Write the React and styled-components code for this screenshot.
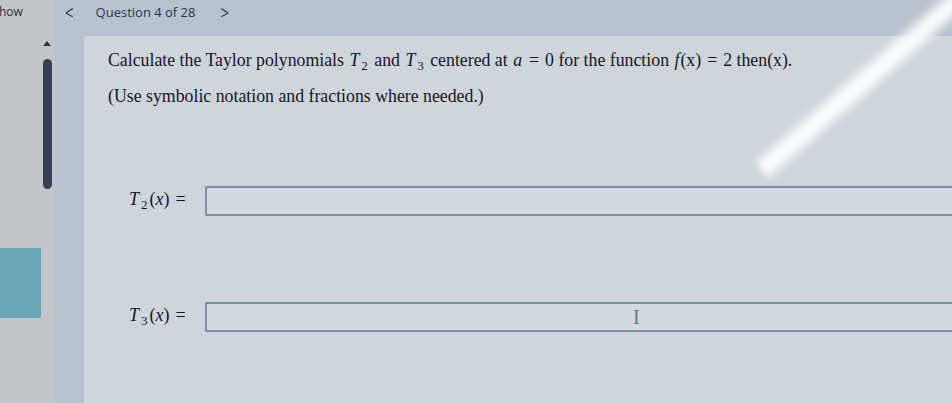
import React from "react";
import styled, { createGlobalStyle } from "styled-components";

const GlobalStyle = createGlobalStyle`
  html, body { margin: 0; padding: 0; }
  body {
    width: 952px;
    height: 403px;
    overflow: hidden;
    background: #c3c7ca;
  }
`;

const Page = styled.div`
  position: relative;
  display: flex;
  width: 952px;
  height: 403px;
  overflow: hidden;
`;

const Sidebar = styled.div`
  width: 55px;
  flex: none;
  background: #c2c6c8;
  display: flex;
  flex-direction: column;
`;

const SideLabel = styled.div`
  font-family: "Open Sans", "Liberation Sans", sans-serif;
  font-size: 12px;
  color: #2b2f3a;
  margin: 3px 0 0 -1px;
  height: 38px;
`;

const ScrollTrack = styled.div`
  display: flex;
  flex-direction: column;
  align-items: center;
  width: 12px;
  margin-left: 41px;
  gap: 13px;
`;

const Arrow = styled.div`
  width: 0;
  height: 0;
  border-left: 4px solid transparent;
  border-right: 4px solid transparent;
  border-bottom: 5px solid #2c3142;
`;

const Thumb = styled.div`
  width: 9px;
  height: 130px;
  border-radius: 5px;
  background: #3a3e55;
`;

const TealBlock = styled.div`
  width: 41px;
  height: 70px;
  margin-top: 59px;
  background: #6ba6b4;
`;

const Main = styled.div`
  flex: 1;
  display: flex;
  flex-direction: column;
  background: #b8c3cd;
`;

const TopBar = styled.div`
  height: 36px;
  display: flex;
  align-items: flex-start;
  padding: 3px 0 0 10px;
  box-sizing: border-box;
  font-family: "Open Sans", "Liberation Sans", sans-serif;
  font-size: 13px;
  color: #283654;
`;

const NavButton = styled.span`
  font-size: 15px;
  line-height: 18px;
  transform: scaleY(1.3);
`;

const Title = styled.span`
  line-height: 18px;
  margin: 0 25px 0 22px;
`;

const Body = styled.div`
  flex: 1;
  display: flex;
`;

const Gutter = styled.div`
  width: 29px;
  flex: none;
`;

const Content = styled.div`
  flex: 1;
  background: #ced6db;
  padding: 12px 0 0 24px;
  font-family: "Liberation Serif", "Times New Roman", serif;
  font-size: 17.8px;
  color: #15171f;
`;

const Para = styled.p`
  margin: 0 0 ${(p) => p.$gap || 0}px 0;
  line-height: 24px;
`;

const M = styled.i`
  font-family: "Liberation Serif", serif;
  margin: 0 ${(p) => (p.$tight ? 0 : 1)}px;
`;

const Eq = styled.span`
  margin: 0 6px;
`;

const Sub = styled.sub`
  font-size: 13px;
  font-style: normal;
  vertical-align: -4px;
  margin-left: 2px;
  margin-right: 1px;
`;

const Row = styled.div`
  display: flex;
  align-items: center;
  margin-top: ${(p) => p.$top}px;
  padding-left: 20px;
`;

const Label = styled.div`
  width: 77px;
  font-size: 18px;
`;

const Field = styled.div`
  flex: 1;
  height: 26px;
  border: 2px solid #7f8ea1;
  border-right: none;
  border-radius: 2px 0 0 2px;
  background: #d3dbe0;
  position: relative;
`;

const Cursor = styled.span`
  position: absolute;
  left: 426px;
  top: 2px;
  font-family: "Liberation Serif", serif;
  font-size: 20px;
  color: #6b7890;
`;

const Glare = styled.div`
  position: absolute;
  left: 845px;
  top: -45px;
  width: 30px;
  height: 260px;
  transform: rotate(49deg);
  background: linear-gradient(90deg, rgba(255,255,255,0) 0%, rgba(255,255,255,0.9) 35%, rgba(255,255,255,0.9) 65%, rgba(255,255,255,0) 100%);
  filter: blur(3px);
  pointer-events: none;
`;

const T = ({ n }) => (
  <M>
    T<Sub>{n}</Sub>
  </M>
);

export default function App() {
  return (
    <>
      <GlobalStyle />
      <Page>
        <Sidebar>
          <SideLabel>how</SideLabel>
          <ScrollTrack>
            <Arrow />
            <Thumb />
          </ScrollTrack>
          <TealBlock />
        </Sidebar>
        <Main>
          <TopBar>
            <NavButton>&lt;</NavButton>
            <Title>Question 4 of 28</Title>
            <NavButton>&gt;</NavButton>
          </TopBar>
          <Body>
            <Gutter />
            <Content>
              <Para $gap={6}>
                Calculate the Taylor polynomials <T n={2} /> and <T n={3} /> centered at{" "}
                <M>a</M>
                <Eq>=</Eq>0 for the function <M>f</M>(x)<Eq>=</Eq>2 then(x).
              </Para>
              <Para>(Use symbolic notation and fractions where needed.)</Para>
              <Row $top={78}>
                <Label>
                  <T n={2} />(<M $tight>x</M>)<Eq>=</Eq>
                </Label>
                <Field />
              </Row>
              <Row $top={86}>
                <Label>
                  <T n={3} />(<M $tight>x</M>)<Eq>=</Eq>
                </Label>
                <Field>
                  <Cursor>I</Cursor>
                </Field>
              </Row>
            </Content>
          </Body>
        </Main>
        <Glare />
      </Page>
    </>
  );
}
